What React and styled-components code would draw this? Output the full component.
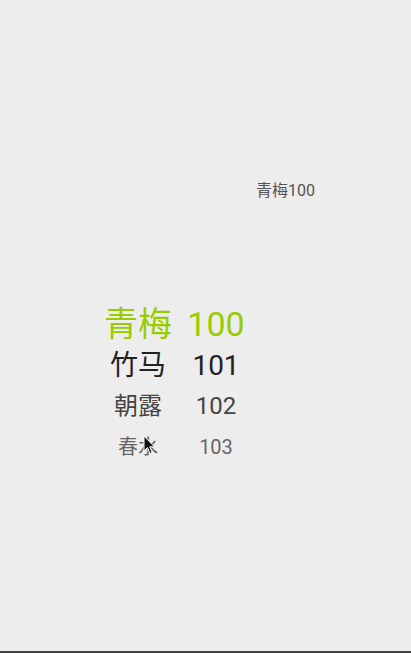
import React from 'react';
import styled, { createGlobalStyle } from 'styled-components';

const items = [
    { name: '青梅', value: 100 },
    { name: '竹马', value: 101 },
    { name: '朝露', value: 102 },
    { name: '春水', value: 103 },
];

const levels = [
    { size: 34, color: '#99cc00' },
    { size: 28, color: '#222222' },
    { size: 24, color: '#444444' },
    { size: 20, color: '#666666' },
];

const App = () => {
    return (
        <Screen>
            <GlobalStyle />
            <Caption>{items[0].name}{items[0].value}</Caption>
            <Picker>
                {items.map((item, index) => (
                    <Row key={item.value} $size={levels[index].size} $color={levels[index].color}>
                        <Cell>{item.name}</Cell>
                        <Cell>{item.value}</Cell>
                        {index === 3 && (
                            <Pointer width="13" height="20" viewBox="0 0 13 20">
                                <path d="M1 1 L1 16 L4.5 12.5 L7 18.5 L9.2 17.6 L6.8 11.8 L11.5 11.8 Z" fill="#111" stroke="#fff" strokeWidth="1" />
                            </Pointer>
                        )}
                    </Row>
                ))}
            </Picker>
        </Screen>
    );
}

const GlobalStyle = createGlobalStyle`
    html, body {
        margin: 0;
        padding: 0;
        background: #ededed;
    }
    body {
        font-family: Roboto, "Noto Sans CJK SC", sans-serif;
    }
`;

const Screen = styled.div`
    height: 651px;
    border-bottom: 2px solid #444444;
    display: flex;
    flex-direction: column;
    background: #ededed;
`;

const Caption = styled.div`
    margin-top: 181px;
    padding-left: 256px;
    font-size: 16px;
    line-height: 20px;
    color: #555555;
`;

const Picker = styled.div`
    margin-top: 103px;
    margin-left: 99px;
    display: flex;
    flex-direction: column;
`;

const Row = styled.div`
    position: relative;
    display: grid;
    grid-template-columns: 78px 78px;
    height: 41px;
    line-height: 41px;
    font-size: ${(p) => p.$size}px;
    color: ${(p) => p.$color};
`;

const Cell = styled.div`
    text-align: center;
    white-space: nowrap;
`;

const Pointer = styled.svg`
    position: absolute;
    left: 44px;
    top: 8px;
`;

export default App;
